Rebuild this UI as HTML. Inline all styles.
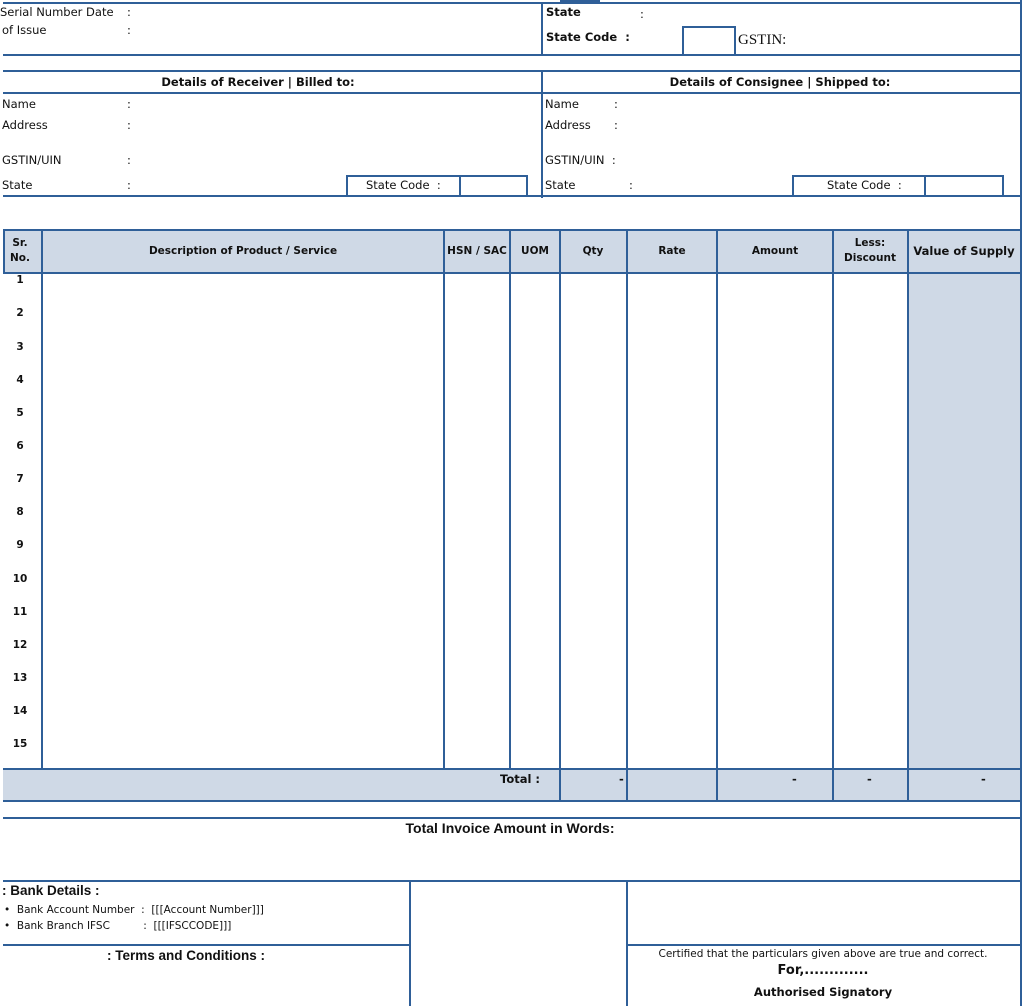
<!DOCTYPE html>
<html><head><meta charset="utf-8"><style>
*{margin:0;padding:0;box-sizing:border-box}
body{width:1024px;height:1006px;background:#fff;position:relative;overflow:hidden;font-family:"DejaVu Sans","Liberation Sans",sans-serif;color:#111}
.h{position:absolute;height:2px;background:#2f5f98}
.v{position:absolute;width:2px;background:#2f5f98}
.f{position:absolute;background:#cfd9e6}
.t{position:absolute;font-size:11.5px;white-space:nowrap;line-height:14px}
.b{font-weight:bold}
.c{text-align:center;transform:translateX(-50%)}
</style></head><body>
<div class="f" style="left:3px;top:230px;width:1018px;height:43px"></div>
<div class="f" style="left:908px;top:273px;width:113px;height:496px"></div>
<div class="f" style="left:3px;top:769px;width:1018px;height:32px"></div>

<div class="h" style="left:3px;top:2px;width:1019px"></div>
<div class="f" style="left:560px;top:0;width:40px;height:3px;background:#2f5f98"></div>
<div class="v" style="left:541px;top:2px;height:54px"></div>
<div class="v" style="left:1020px;top:0;height:1006px"></div>
<div class="h" style="left:3px;top:54px;width:1019px"></div>
<div class="h" style="left:3px;top:70px;width:1019px"></div>
<div class="h" style="left:3px;top:92px;width:1019px"></div>
<div class="v" style="left:541px;top:70px;height:128px"></div>
<div class="h" style="left:3px;top:195px;width:1019px"></div>
<div class="h" style="left:682px;top:26px;width:54px"></div>
<div class="v" style="left:682px;top:26px;height:29px"></div>
<div class="v" style="left:734px;top:26px;height:29px"></div>
<div class="t" style="left:738px;top:33px;font-family:'Liberation Serif',serif;font-size:15px">GSTIN:</div>

<div class="t" style="left:0;top:5px">Serial Number Date</div>
<div class="t" style="left:127px;top:5px">:</div>
<div class="t" style="left:2px;top:23px">of Issue</div>
<div class="t" style="left:127px;top:23px">:</div>
<div class="t b" style="left:546px;top:5px">State</div>
<div class="t" style="left:640px;top:7px">:</div>
<div class="t b" style="left:546px;top:30px">State Code&nbsp; :</div>

<div class="t b c" style="left:258px;top:75px">Details of Receiver | Billed to:</div>
<div class="t b c" style="left:780px;top:75px">Details of Consignee | Shipped to:</div>

<div class="t" style="left:2px;top:97px">Name</div><div class="t" style="left:127px;top:97px">:</div>
<div class="t" style="left:2px;top:118px">Address</div><div class="t" style="left:127px;top:118px">:</div>
<div class="t" style="left:2px;top:153px">GSTIN/UIN</div><div class="t" style="left:127px;top:153px">:</div>
<div class="t" style="left:2px;top:178px">State</div><div class="t" style="left:127px;top:178px">:</div>
<div class="h" style="left:346px;top:175px;width:182px"></div>
<div class="v" style="left:346px;top:175px;height:21px"></div>
<div class="v" style="left:459px;top:175px;height:22px"></div>
<div class="v" style="left:526px;top:175px;height:22px"></div>
<div class="t" style="left:366px;top:178px">State Code&nbsp; :</div>

<div class="t" style="left:545px;top:97px">Name</div><div class="t" style="left:614px;top:97px">:</div>
<div class="t" style="left:545px;top:118px">Address</div><div class="t" style="left:614px;top:118px">:</div>
<div class="t" style="left:545px;top:153px">GSTIN/UIN&nbsp; :</div>
<div class="t" style="left:545px;top:178px">State</div><div class="t" style="left:629px;top:178px">:</div>
<div class="h" style="left:792px;top:175px;width:212px"></div>
<div class="v" style="left:792px;top:175px;height:21px"></div>
<div class="v" style="left:924px;top:175px;height:22px"></div>
<div class="v" style="left:1002px;top:175px;height:22px"></div>
<div class="t" style="left:827px;top:178px">State Code&nbsp; :</div>

<div class="h" style="left:3px;top:229px;width:1019px"></div>
<div class="h" style="left:3px;top:272px;width:1019px"></div>
<div class="v" style="left:3px;top:229px;height:44px"></div>
<div class="v" style="left:41px;top:229px;height:541px"></div>
<div class="v" style="left:443px;top:229px;height:541px"></div>
<div class="v" style="left:509px;top:229px;height:541px"></div>
<div class="v" style="left:559px;top:229px;height:573px"></div>
<div class="v" style="left:626px;top:229px;height:573px"></div>
<div class="v" style="left:716px;top:229px;height:573px"></div>
<div class="v" style="left:832px;top:229px;height:573px"></div>
<div class="v" style="left:907px;top:229px;height:573px"></div>
<div class="h" style="left:3px;top:768px;width:1019px"></div>
<div class="h" style="left:3px;top:800px;width:1019px"></div>

<div class="t b c" style="left:20px;top:236px;font-size:10.5px;text-align:center;line-height:15px">Sr.<br>No.</div>
<div class="t b c" style="left:243px;top:244px;font-size:10.5px">Description of Product / Service</div>
<div class="t b c" style="left:477px;top:244px;font-size:10.5px">HSN / SAC</div>
<div class="t b c" style="left:535px;top:244px;font-size:10.5px">UOM</div>
<div class="t b c" style="left:593px;top:244px;font-size:10.5px">Qty</div>
<div class="t b c" style="left:672px;top:244px;font-size:10.5px">Rate</div>
<div class="t b c" style="left:775px;top:244px;font-size:10.5px">Amount</div>
<div class="t b c" style="left:870px;top:236px;font-size:10.5px;text-align:center;line-height:15px">Less:<br>Discount</div>
<div class="t b c" style="left:964px;top:244px;font-size:11.5px">Value of Supply</div>

<div class="t b c" style="left:20px;top:273px;font-size:10.5px">1</div>
<div class="t b c" style="left:20px;top:306px;font-size:10.5px">2</div>
<div class="t b c" style="left:20px;top:340px;font-size:10.5px">3</div>
<div class="t b c" style="left:20px;top:373px;font-size:10.5px">4</div>
<div class="t b c" style="left:20px;top:406px;font-size:10.5px">5</div>
<div class="t b c" style="left:20px;top:439px;font-size:10.5px">6</div>
<div class="t b c" style="left:20px;top:472px;font-size:10.5px">7</div>
<div class="t b c" style="left:20px;top:505px;font-size:10.5px">8</div>
<div class="t b c" style="left:20px;top:538px;font-size:10.5px">9</div>
<div class="t b c" style="left:20px;top:572px;font-size:10.5px">10</div>
<div class="t b c" style="left:20px;top:605px;font-size:10.5px">11</div>
<div class="t b c" style="left:20px;top:638px;font-size:10.5px">12</div>
<div class="t b c" style="left:20px;top:671px;font-size:10.5px">13</div>
<div class="t b c" style="left:20px;top:704px;font-size:10.5px">14</div>
<div class="t b c" style="left:20px;top:737px;font-size:10.5px">15</div>

<div class="t b" style="left:500px;top:772px">Total :</div>
<div class="t b" style="left:619px;top:772px">-</div>
<div class="t b" style="left:792px;top:772px">-</div>
<div class="t b" style="left:867px;top:772px">-</div>
<div class="t b" style="left:981px;top:772px">-</div>

<div class="h" style="left:3px;top:817px;width:1019px"></div>
<div class="t b c" style="left:510px;top:821px;font-size:14px;font-family:'Liberation Sans',sans-serif">Total Invoice Amount in Words:</div>
<div class="h" style="left:3px;top:880px;width:1019px"></div>
<div class="v" style="left:409px;top:880px;height:126px"></div>
<div class="v" style="left:626px;top:880px;height:126px"></div>
<div class="h" style="left:3px;top:944px;width:408px"></div>
<div class="h" style="left:626px;top:944px;width:396px"></div>

<div class="t b" style="left:2px;top:884px;font-size:13.5px;font-family:'Liberation Sans',sans-serif">: Bank Details :</div>
<div class="t" style="left:4px;top:903px;font-size:10.5px">•&nbsp; Bank Account Number&nbsp; :&nbsp; [[[Account Number]]]</div>
<div class="t" style="left:4px;top:919px;font-size:10.5px">•&nbsp; Bank Branch IFSC&nbsp;&nbsp;&nbsp;&nbsp;&nbsp;&nbsp;&nbsp;&nbsp;&nbsp; :&nbsp; [[[IFSCCODE]]]</div>
<div class="t b c" style="left:186px;top:949px;font-size:13.5px;font-family:'Liberation Sans',sans-serif">: Terms and Conditions :</div>

<div class="t c" style="left:823px;top:947px;font-size:10.5px">Certified that the particulars given above are true and correct.</div>
<div class="t b c" style="left:823px;top:964px;font-size:13px">For,.............</div>
<div class="t b c" style="left:823px;top:985px;font-size:11.5px">Authorised Signatory</div>
</body></html>
